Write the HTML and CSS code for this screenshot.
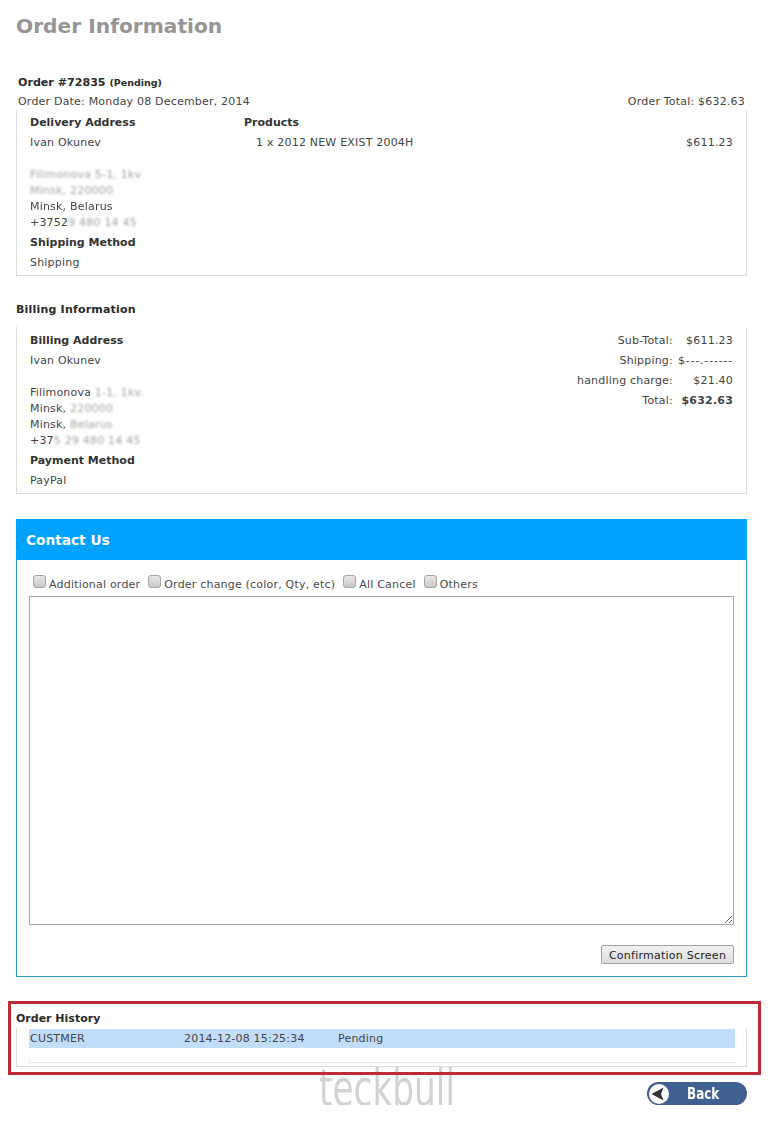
FILE: index.html
```html
<!DOCTYPE html>
<html lang="en">
<head>
    <meta charset="UTF-8">
    <meta name="viewport" content="width=device-width, initial-scale=1.0">
    <title>Order Information</title>
    <link rel="stylesheet" href="styles.css">
</head>
<body>
    <h1 class="page-title">Order Information</h1>

    <div class="order-head">
        <div class="order-id">Order #72835 <small>(Pending)</small></div>
        <div class="order-dates">
            <span>Order Date: Monday 08 December, 2014</span>
            <span>Order Total: $632.63</span>
        </div>
    </div>

    <div class="box box-delivery">
        <div class="col-address">
            <h3>Delivery Address</h3>
            <p>Ivan Okunev</p>
            <address>
                <span class="blur">Filimonova 5-1, 1kv</span><br>
                <span class="blur">Minsk, 220000</span><br>
                <span class="soft">Minsk, Belarus</span><br>
                +3752<span class="blur">9 480 14 45</span>
            </address>
            <h3>Shipping Method</h3>
            <p>Shipping</p>
        </div>
        <div class="col-products">
            <h3>Products</h3>
            <div class="product-row">
                <span>1 x 2012 NEW EXIST 2004H</span>
                <span>$611.23</span>
            </div>
        </div>
    </div>

    <h2 class="section-title section-billing">Billing Information</h2>
    <div class="box box-billing">
        <div class="col-address">
            <h3>Billing Address</h3>
            <p>Ivan Okunev</p>
            <address>
                Filimonova <span class="blur">1-1, 1kv.</span><br>
                Minsk, <span class="blur">220000</span><br>
                Minsk, <span class="blur">Belarus</span><br>
                +37<span class="blur">5 29 480 14 45</span>
            </address>
            <h3>Payment Method</h3>
            <p>PayPal</p>
        </div>
        <table class="totals">
            <tr><td>Sub-Total:</td><td>$611.23</td></tr>
            <tr><td>Shipping:</td><td class="dashes">$---.------</td></tr>
            <tr><td>handling charge:</td><td>$21.40</td></tr>
            <tr><td>Total:</td><td><b>$632.63</b></td></tr>
        </table>
    </div>

    <form class="contact">
        <h2 class="contact-title">Contact Us</h2>
        <div class="contact-body">
            <div class="checks">
                <label><input type="checkbox"> Additional order</label>
                <label><input type="checkbox"> Order change (color, Qty, etc)</label>
                <label><input type="checkbox"> All Cancel</label>
                <label><input type="checkbox"> Others</label>
            </div>
            <textarea></textarea>
            <div class="contact-actions">
                <button type="button">Confirmation Screen</button>
            </div>
        </div>
    </form>

    <div class="history">
        <h2 class="section-title">Order History</h2>
        <div class="history-box">
            <div class="history-row">
                <span class="who">CUSTMER</span>
                <span class="when">2014-12-08 15:25:34</span>
                <span>Pending</span>
            </div>
            <div class="history-line"></div>
        </div>
    </div>

    <div class="footer">
        <span class="watermark">teckbull</span>
        <a class="back" href="#">
            <svg class="back-icon" width="22" height="22" viewBox="0 0 22 22">
                <circle cx="11" cy="11" r="10" fill="#fff"/>
                <path d="M3.5 11 L15.5 4.5 L13 11 L15.5 17.5 Z" fill="#333"/>
            </svg>
            <span class="back-label">Back</span>
        </a>
    </div>
</body>
</html>
```

FILE: styles.css
```css
* {
    box-sizing: border-box;
}
body {
    margin: 0;
    padding: 0 25px 0 16px;
    background-color: #fff;
    color: #444;
    font-family: "DejaVu Sans", Verdana, sans-serif;
    font-size: 11px;
    letter-spacing: .2px;
    line-height: 16px;
}
.page-title {
    margin: 0;
    padding-top: 12px;
    height: 75px;
    font-size: 20.2px;
    letter-spacing: 0;
    line-height: 28px;
    color: #959595;
}
.order-head {
    padding: 0 2px;
    height: 35px;
}
.order-id {
    color: #2a2a2a;
    font-weight: bold;
    font-size: 11.1px;
    letter-spacing: 0;
    height: 19px;
}
.order-id small {
    font-size: 9.5px;
}
.order-dates {
    display: flex;
    justify-content: space-between;
}
.box {
    display: flex;
    border: 1px solid #dcdcdc;
    border-top: none;
    padding: 5px 13px 5px;
}
h3 {
    margin: 0;
    font-size: 11px;
    letter-spacing: 0;
    line-height: 16px;
    color: #333;
}
p {
    margin: 4px 0;
}
address {
    font-style: normal;
    margin: 16px 0 4px;
}
.blur {
    filter: blur(1px);
    opacity: .5;
}
.soft {
    filter: blur(.4px);
}
.col-address {
    width: 214px;
    flex-shrink: 0;
}
.col-products {
    flex: 1;
}
.product-row {
    display: flex;
    justify-content: space-between;
    margin-top: 4px;
    padding-left: 12px;
}
.section-title {
    margin: 0;
    font-size: 11px;
    line-height: 16px;
    color: #2a2a2a;
}
.box-delivery {
    height: 166px;
}
.section-billing {
    margin-top: 26px;
    margin-bottom: 9px;
}
.box-billing {
    height: 167px;
    padding-top: 6px;
    justify-content: space-between;
}
.totals {
    align-self: flex-start;
    border-collapse: collapse;
    margin-top: -2px;
}
.totals td {
    padding: 2px 0;
    text-align: right;
}
.totals td:first-child {
    padding-right: 5px;
}
.totals .dashes {
    letter-spacing: .8px;
}
.contact {
    margin-top: 25px;
    height: 458px;
    border: 1px solid #2b9bc3;
    border-top: none;
}
.contact-title {
    margin: 0 -1px;
    height: 41px;
    padding-left: 10px;
    background-color: #00a2ff;
    color: #fff;
    font-size: 13.7px;
    letter-spacing: 0;
    line-height: 42px;
}
.contact-body {
    padding: 0 12px;
}
.checks {
    display: flex;
    gap: 8px;
    height: 36px;
    padding: 15px 0 0 4px;
    color: #4a4a4a;
}
.checks label {
    display: flex;
    gap: 3px;
    padding-top: 2px;
    align-items: flex-start;
}
.checks label input {
    appearance: none;
    width: 13px;
    height: 13px;
    margin: -2px 0 0;
    border: 1px solid #a5a5a5;
    border-radius: 3px;
    background: linear-gradient(#e6e6e6, #c9c9c9);
}
textarea {
    display: block;
    width: 705px;
    height: 329px;
    border: 1px solid #a9a9a9;
    margin: 0;
    padding: 2px;
}
.contact-actions {
    display: flex;
    justify-content: flex-end;
    margin-top: 20px;
}
button {
    width: 133px;
    height: 19px;
    padding: 1px 0 0;
    border: 1px solid #a0a0a0;
    border-radius: 2px;
    background: linear-gradient(#f2f2f2, #dcdcdc);
    font: 11px "DejaVu Sans", Verdana, sans-serif;
    letter-spacing: .25px;
    color: #222;
}
.history {
    position: relative;
    z-index: 1;
    margin: 24px -14px 0 -8px;
    height: 74px;
    padding: 7px 5px 0;
    border: 3px solid #c02a36;
}
.history .section-title {
    height: 18px;
    letter-spacing: 0;
}
.history-box {
    width: 731px;
    height: 39px;
    margin-top: -1px;
    border: 1px solid #dcdcdc;
    border-top: none;
    padding: 1px 11px 0 12px;
}
.history-row {
    display: flex;
    height: 19px;
    line-height: 19px;
    padding-left: 1px;
    background-color: #c2dcfb;
}
.who {
    width: 154px;
}
.when {
    width: 154px;
}
.history-line {
    margin-top: 14px;
    border-top: 1px dotted #ccc;
}
.footer {
    position: relative;
    display: flex;
    justify-content: flex-end;
    padding-top: 7px;
}
.back {
    display: flex;
    align-items: center;
    width: 100px;
    height: 23px;
    padding-left: 1px;
    border-radius: 12px;
    background-color: #3f6091;
    color: #fff;
    font-weight: bold;
    font-size: 15px;
    letter-spacing: 0;
    text-decoration: none;
}
.back-icon {
    margin-right: 17px;
}
.back-label {
    transform: scaleX(.8);
    transform-origin: left center;
}
.watermark {
    position: absolute;
    left: 303px;
    top: -17px;
    color: #d2d2d2;
    font-size: 52px;
    letter-spacing: 0;
    line-height: 60px;
    transform: scaleX(.66);
    transform-origin: left center;
}
```
